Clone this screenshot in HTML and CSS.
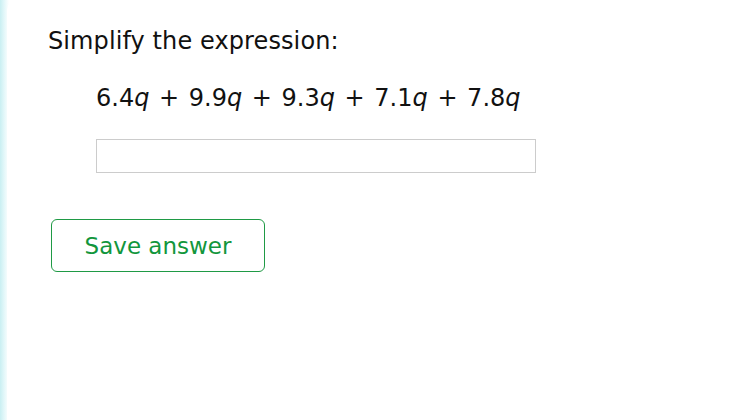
FILE: index.html
```html
<!DOCTYPE html>
<html>
<head>
<meta charset="utf-8">
<link rel="stylesheet" href="styles.css">
</head>
<body>
<div class="frame">
  <div class="card">
    <p class="prompt">Simplify the expression:</p>
    <div class="expr">6.4<i>q</i> + 9.9<i>q</i> + 9.3<i>q</i> + 7.1<i>q</i> + 7.8<i>q</i></div>
    <div class="answer"><input class="field" type="text"></div>
    <button class="save">Save answer</button>
  </div>
</div>
</body>
</html>
```
FILE: styles.css
```css
html, body {
  margin: 0;
  padding: 0;
  background: #ffffff;
}
.frame {
  width: 735px;
  height: 420px;
  background: linear-gradient(to right, #c9eff2 0px, #e2f7f9 4px, #ffffff 9px);
  display: flex;
}
.card {
  flex: 1;
  margin-left: 7px;
  background: #ffffff;
  border-top-left-radius: 10px;
  font-family: "DejaVu Sans", Verdana, sans-serif;
  color: #111;
  padding: 26px 0 0 41px;
}
.prompt {
  margin: 0;
  font-size: 24px;
  line-height: 30px;
  letter-spacing: 0.1px;
}
.expr {
  margin: 27px 0 0 48px;
  font-size: 24px;
  line-height: 30px;
  word-spacing: 2px;
}
.expr i {
  font-style: italic;
}
.answer {
  margin: 26px 0 0 48px;
}
.field {
  display: block;
  box-sizing: border-box;
  width: 440px;
  height: 34px;
  border: 1px solid #cccccc;
  margin: 0;
  padding: 0 6px;
  background: #fff;
}
.save {
  display: block;
  box-sizing: border-box;
  margin: 46px 0 0 3px;
  width: 214px;
  height: 53px;
  background: #fff;
  border: 1px solid #1f9a45;
  border-radius: 6px;
  color: #12963c;
  font-family: "DejaVu Sans", Verdana, sans-serif;
  font-size: 23px;
  padding: 0;
}
```
